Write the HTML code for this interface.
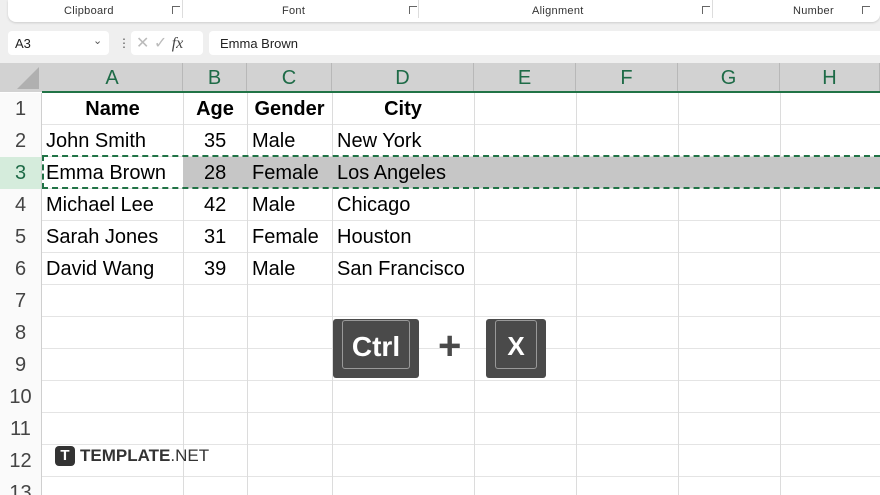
<!DOCTYPE html>
<html style="overflow:hidden"><head><meta charset="utf-8"><style>
*{margin:0;padding:0;box-sizing:border-box}
html,body{width:880px;height:495px;overflow:hidden}
body{background:#efefef;font-family:"Liberation Sans",sans-serif;position:relative}
.a{position:absolute}
.rib{left:8px;top:0;width:872px;height:22px;background:#fff;border-radius:0 0 8px 8px;box-shadow:0 1px 2px #ccc;font-size:11px;color:#333}
.rib span{position:absolute;top:5px;letter-spacing:.3px}
.sep{position:absolute;top:0;width:1px;height:18px;background:#ddd}
.lk{position:absolute;top:6px;width:8px;height:8px;border-left:1px solid #666;border-top:1px solid #666;font-size:0}
.grid{left:0;top:63px;width:880px;height:432px;background:#fff}
.vl{position:absolute;top:63px;width:1px;height:432px;background:#dcdcdc}
.hl{position:absolute;left:0;width:880px;height:1px;background:#e4e4e4}
.ch{position:absolute;top:63px;height:29px;background:#d2d2d2;color:#1e6b47;font-size:20px;text-align:center;line-height:31px;border-right:1px solid #b8b8b8}
.rh{position:absolute;left:0;width:42px;height:32px;color:#444;font-size:20px;text-align:center;line-height:33px;background:#fafafa;border-right:1px solid #cfcfcf}
.c{position:absolute;font-size:20px;color:#000;line-height:32px;height:32px;white-space:nowrap}
.key{position:absolute;background:#4a4a4a;border-radius:3px;color:#fff;font-weight:bold;text-align:center;overflow:hidden}
.key i{position:absolute;left:9px;right:9px;top:1px;bottom:9px;border:1px solid #999;border-radius:3px;font-style:normal}
</style></head><body>
<div class="a rib">
<span style="left:56px">Clipboard</span><div class="lk" style="left:164px"></div><div class="sep" style="left:174px"></div>
<span style="left:274px">Font</span><div class="lk" style="left:401px"></div><div class="sep" style="left:410px"></div>
<span style="left:524px">Alignment</span><div class="lk" style="left:694px"></div><div class="sep" style="left:704px"></div>
<span style="left:785px">Number</span><div class="lk" style="left:854px"></div>
</div>
<div class="a" style="left:8px;top:31px;width:101px;height:24px;background:#fff;border-radius:4px;font-size:13px;padding:5px 0 0 7px;color:#222">A3<span style="position:absolute;left:85px;top:3px;font-size:11px;color:#555">&#8964;</span></div>
<div class="a" style="left:118px;top:36px;font-size:12px;color:#555">&#8942;</div>
<div class="a" style="left:131px;top:31px;width:72px;height:24px;background:#fff;border-radius:4px;color:#bbb;font-size:16px;padding:2px 0 0 5px">✕ ✓ <span style="color:#444;font-style:italic;font-family:'Liberation Serif',serif">fx</span></div>
<div class="a" style="left:209px;top:31px;width:671px;height:24px;background:#fff;border-radius:4px 0 0 4px;font-size:13px;padding:5px 0 0 11px;color:#222">Emma Brown</div>
<div class="a grid"></div>
<div class="hl" style="top:124px"></div><div class="hl" style="top:156px"></div><div class="hl" style="top:188px"></div><div class="hl" style="top:220px"></div><div class="hl" style="top:252px"></div><div class="hl" style="top:284px"></div><div class="hl" style="top:316px"></div><div class="hl" style="top:348px"></div><div class="hl" style="top:380px"></div><div class="hl" style="top:412px"></div><div class="hl" style="top:444px"></div><div class="hl" style="top:476px"></div>
<div class="vl" style="left:183px"></div><div class="vl" style="left:247px"></div><div class="vl" style="left:332px"></div><div class="vl" style="left:474px"></div><div class="vl" style="left:576px"></div><div class="vl" style="left:678px"></div><div class="vl" style="left:780px"></div>
<div class="a" style="left:183px;top:157px;width:697px;height:31px;background:#c6c6c6"></div>
<div class="a" style="left:0;top:63px;width:42px;height:29px;background:#d2d2d2"><div style="position:absolute;right:3px;bottom:3px;width:0;height:0;border-left:22px solid transparent;border-bottom:22px solid #b0b0b0"></div></div>
<div class="ch" style="left:42px;width:141px">A</div><div class="ch" style="left:183px;width:64px">B</div><div class="ch" style="left:247px;width:85px">C</div><div class="ch" style="left:332px;width:142px">D</div><div class="ch" style="left:474px;width:102px">E</div><div class="ch" style="left:576px;width:102px">F</div><div class="ch" style="left:678px;width:102px">G</div><div class="ch" style="left:780px;width:100px">H</div>
<div class="a" style="left:42px;top:91px;width:838px;height:2px;background:#217346"></div>
<div class="rh" style="top:93px">1</div><div class="rh" style="top:125px">2</div><div class="rh" style="top:157px;background:#d5ecdc;color:#1e6b47">3</div><div class="rh" style="top:189px">4</div><div class="rh" style="top:221px">5</div><div class="rh" style="top:253px">6</div><div class="rh" style="top:285px">7</div><div class="rh" style="top:317px">8</div><div class="rh" style="top:349px">9</div><div class="rh" style="top:381px">10</div><div class="rh" style="top:413px">11</div><div class="rh" style="top:445px">12</div><div class="rh" style="top:477px">13</div>
<div class="c" style="left:42px;width:141px;top:93px;text-align:center;font-weight:bold">Name</div>
<div class="c" style="left:183px;width:64px;top:93px;text-align:center;font-weight:bold">Age</div>
<div class="c" style="left:247px;width:85px;top:93px;text-align:center;font-weight:bold">Gender</div>
<div class="c" style="left:332px;width:142px;top:93px;text-align:center;font-weight:bold">City</div>
<div class="c" style="left:46px;top:125px">John Smith</div><div class="c" style="left:204px;top:125px">35</div><div class="c" style="left:252px;top:125px">Male</div><div class="c" style="left:337px;top:125px">New York</div>
<div class="c" style="left:46px;top:157px">Emma Brown</div><div class="c" style="left:204px;top:157px">28</div><div class="c" style="left:252px;top:157px">Female</div><div class="c" style="left:337px;top:157px">Los Angeles</div>
<div class="c" style="left:46px;top:189px">Michael Lee</div><div class="c" style="left:204px;top:189px">42</div><div class="c" style="left:252px;top:189px">Male</div><div class="c" style="left:337px;top:189px">Chicago</div>
<div class="c" style="left:46px;top:221px">Sarah Jones</div><div class="c" style="left:204px;top:221px">31</div><div class="c" style="left:252px;top:221px">Female</div><div class="c" style="left:337px;top:221px">Houston</div>
<div class="c" style="left:46px;top:253px">David Wang</div><div class="c" style="left:204px;top:253px">39</div><div class="c" style="left:252px;top:253px">Male</div><div class="c" style="left:337px;top:253px">San Francisco</div>
<div class="a" style="left:42px;top:155px;width:838px;height:34px;border:2px dashed #217346;border-right:none"></div>
<div class="key" style="left:333px;top:319px;width:86px;height:59px;font-size:28px;line-height:56px"><i></i>Ctrl</div>
<div class="a" style="left:438px;top:324px;font-size:40px;font-weight:bold;color:#4a4a4a">+</div>
<div class="key" style="left:486px;top:319px;width:60px;height:59px;font-size:26px;line-height:54px"><i></i>X</div>
<div class="a" style="left:55px;top:446px;width:20px;height:20px;background:#333;border-radius:4px;color:#fff;font-weight:bold;font-size:15px;text-align:center;line-height:20px">T</div>
<div class="a" style="left:80px;top:446px;font-size:17px;color:#333;line-height:20px"><b>TEMPLATE</b>.NET</div>
</body></html>
